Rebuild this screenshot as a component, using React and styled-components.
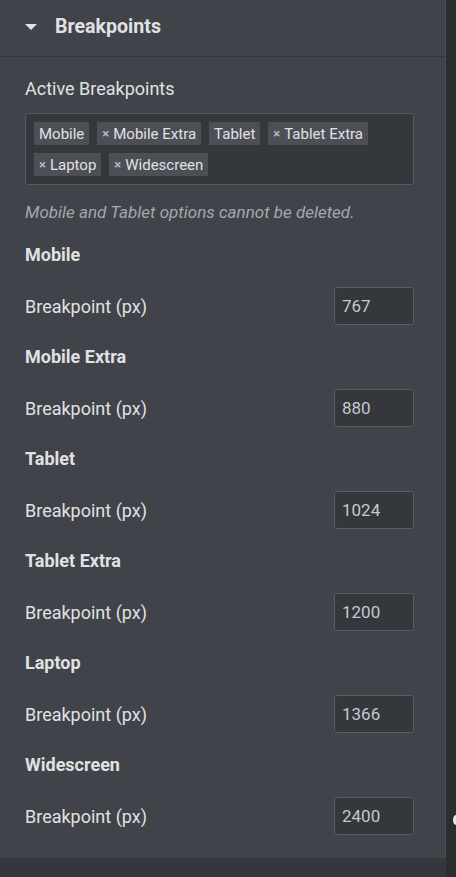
import styled, { createGlobalStyle } from "styled-components"

const GlobalStyle = createGlobalStyle`
    html, body {
        margin: 0;
        padding: 0;
        background: #2d2e32;
    }
    body {
        font-family: Roboto, "Liberation Sans", sans-serif;
    }
`

const TAGS = [
    { name: "Mobile", removable: false },
    { name: "Mobile Extra", removable: true },
    { name: "Tablet", removable: false },
    { name: "Tablet Extra", removable: true },
    { name: "Laptop", removable: true },
    { name: "Widescreen", removable: true },
]

const DEVICES = [
    { name: "Mobile", value: 767 },
    { name: "Mobile Extra", value: 880 },
    { name: "Tablet", value: 1024 },
    { name: "Tablet Extra", value: 1200 },
    { name: "Laptop", value: 1366 },
    { name: "Widescreen", value: 2400 },
]

export default function App() {
    return (
        <>
            <GlobalStyle />
            <Screen>
                <Panel>
                    <Header>
                        <Caret />
                        <Title>Breakpoints</Title>
                    </Header>
                    <Body>
                        <FieldLabel>Active Breakpoints</FieldLabel>
                        <TagBox>
                            {TAGS.map((t) => (
                                <Tag key={t.name}>
                                    {t.removable && <Remove>×</Remove>}
                                    {t.name}
                                </Tag>
                            ))}
                        </TagBox>
                        <Note>Mobile and Tablet options cannot be deleted.</Note>
                        {DEVICES.map((d) => (
                            <Device key={d.name}>
                                <DeviceName>{d.name}</DeviceName>
                                <Row>
                                    <RowLabel>Breakpoint (px)</RowLabel>
                                    <NumberInput defaultValue={d.value} />
                                </Row>
                            </Device>
                        ))}
                    </Body>
                </Panel>
                <Side>
                    <Handle />
                </Side>
            </Screen>
        </>
    )
}

const Screen = styled.div`
    display: flex;
    width: 456px;
    height: 877px;
    overflow: hidden;
    background: #34373c;
`
const Panel = styled.div`
    width: 445px;
    height: 858px;
    background: #404349;
    border-right: 1px solid #4a4d53;
    display: flex;
    flex-direction: column;
`
const Header = styled.div`
    height: 57px;
    box-sizing: border-box;
    border-bottom: 1px solid #33363b;
    display: flex;
    align-items: center;
    padding-left: 25px;
    padding-bottom: 4px;
`
const Caret = styled.span`
    width: 0;
    height: 0;
    border-left: 6px solid transparent;
    border-right: 6px solid transparent;
    border-top: 6px solid #e0e1e3;
    margin-right: 18px;
    margin-top: 1px;
`
const Title = styled.div`
    font-weight: 700;
    font-size: 19.6px;
    color: #e0e1e3;
`
const Body = styled.div`
    padding: 20px 31px 0 25px;
`
const FieldLabel = styled.div`
    font-size: 18px;
    line-height: 24px;
    color: #e0e1e3;
`
const TagBox = styled.div`
    margin-top: 12px;
    border: 1px solid #55585e;
    border-radius: 3px;
    background: #34373c;
    padding: 8px;
    display: flex;
    flex-wrap: wrap;
    gap: 8px;
`
const Tag = styled.span`
    display: inline-flex;
    align-items: center;
    height: 23px;
    padding: 0 5px;
    background: #4c4f56;
    font-size: 15px;
    color: #e0e1e3;
`
const Remove = styled.span`
    font-size: 13px;
    color: #b5b8bd;
    margin-right: 4px;
    font-weight: 700;
`
const Note = styled.div`
    margin-top: 16px;
    font-size: 17px;
    font-style: italic;
    color: #a4a8ae;
    line-height: 22px;
`
const Device = styled.div`
    margin-top: 21px;
`
const DeviceName = styled.div`
    font-weight: 700;
    font-size: 18px;
    color: #e0e1e3;
    line-height: 22px;
`
const Row = styled.div`
    display: flex;
    align-items: center;
    justify-content: space-between;
    margin-top: 21px;
`
const RowLabel = styled.div`
    font-size: 18px;
    color: #e0e1e3;
`
const NumberInput = styled.input`
    width: 80px;
    height: 38px;
    box-sizing: border-box;
    background: #34373c;
    border: 1px solid #5a5d63;
    border-radius: 3px;
    color: #c5c8cc;
    font-family: Roboto, "Liberation Sans", sans-serif;
    font-size: 17px;
    padding: 0 7px;
    outline: none;
`
const Side = styled.div`
    flex: 1;
    height: 877px;
    background: #2c2d31;
    position: relative;
`
const Handle = styled.span`
    position: absolute;
    left: 7px;
    top: 815px;
    width: 6px;
    height: 10px;
    border-radius: 50%;
    background: #e8e8e8;
`
